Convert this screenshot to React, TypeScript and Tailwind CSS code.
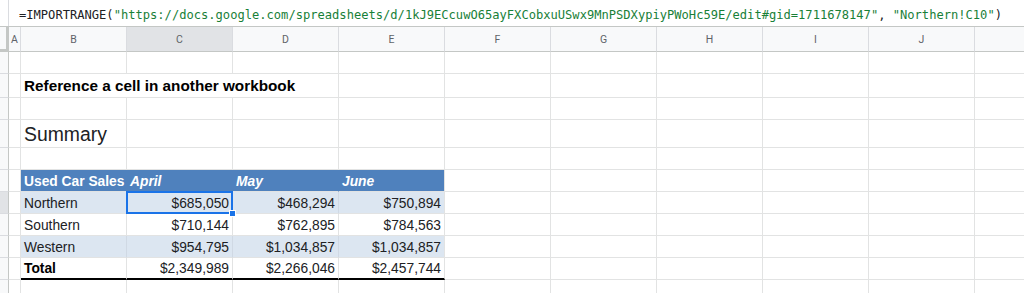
import React from "react";

const GRID = "border-[#e2e3e3]";

function Row({
  h,
  active = false,
  fill = 5,
  children,
}: {
  h: string;
  active?: boolean;
  fill?: number;
  children?: React.ReactNode;
}) {
  return (
    <div className={`flex ${h}`}>
      <div
        className={`w-[9px] shrink-0 border-r border-b border-r-[#c4c7c5] border-b-[#dadce0] ${
          active ? "bg-[#e1e3e6]" : "bg-[#f8f9fa]"
        }`}
      />
      <div className={`w-[12px] shrink-0 border-r border-b ${GRID}`} />
      {children}
      {Array.from({ length: fill }).map((_, i) => (
        <div key={i} className={`w-[106px] shrink-0 border-r border-b ${GRID}`} />
      ))}
      <div className={`flex-1 border-b ${GRID}`} />
    </div>
  );
}

function Empty({ n = 1 }: { n?: number }) {
  return (
    <>
      {Array.from({ length: n }).map((_, i) => (
        <div key={i} className={`w-[106px] shrink-0 border-r border-b ${GRID}`} />
      ))}
    </>
  );
}

function Cell({
  children,
  cls = "",
  right = false,
}: {
  children?: React.ReactNode;
  cls?: string;
  right?: boolean;
}) {
  return (
    <div
      className={`w-[106px] shrink-0 border-r border-b flex items-end px-[3px] pb-[1px] text-[13.8px] leading-[16px] whitespace-nowrap ${
        right ? "justify-end" : "justify-start"
      } ${cls}`}
    >
      {children}
    </div>
  );
}

const G = "text-[#188038]";

export default function App() {
  const cols = ["A", "B", "C", "D", "E", "F", "G", "H", "I", "J"];
  const light = "bg-[#dce6f1] border-r-[#d0d9e4] border-b-[#e2e3e3] text-[#202124]";
  const white = "bg-white border-[#e2e3e3] text-[#202124]";
  return (
    <div className="w-[1024px] h-[293px] overflow-hidden bg-white font-['Liberation_Sans',Arial,sans-serif] text-black">
      {/* formula bar */}
      <div className="flex h-[27px] border-b border-[#c4c7c5]">
        <div className="w-[9px] shrink-0 border-r border-[#dadce0]" />
        <div className="flex items-center pl-[10px] pt-[3px] font-['DejaVu_Sans_Mono','Liberation_Mono',monospace] text-[12.1px] leading-[16px] whitespace-nowrap text-[#202124]">
          <span>=IMPORTRANGE(</span>
          <span className={G}>
            "https://docs.google.com/spreadsheets/d/1kJ9ECcuwO65ayFXCobxuUSwx9MnPSDXypiyPWoHc59E/edit#gid=1711678147"
          </span>
          <span>,&nbsp;</span>
          <span className={G}>"Northern!C10"</span>
          <span>)</span>
        </div>
      </div>

      {/* column headers */}
      <div className="flex h-[25px] bg-[#f8f9fa] font-['Roboto',sans-serif] text-[10.5px] text-[#5f6368]">
        <div className="w-[9px] shrink-0 border-r-[3px] border-b-[3px] border-[#c4c7c5]" />
        {cols.map((c) => (
          <div
            key={c}
            className={`${c === "A" ? "w-[12px]" : "w-[106px]"} shrink-0 flex items-center justify-center pt-[1px] border-r border-b border-r-[#dadce0] border-b-[#c4c7c5] ${
              c === "C" ? "bg-[#e1e3e6]" : ""
            }`}
          >
            {c}
          </div>
        ))}
        <div className="flex-1 border-b border-[#c4c7c5]" />
      </div>

      {/* row 1 */}
      <Row h="h-[22px]">
        <Empty n={4} />
      </Row>

      {/* row 2 title */}
      <Row h="h-[24px]">
        <div
          className={`w-[318px] shrink-0 border-r border-b ${GRID} flex items-end px-[3px] pb-[2px] text-[15.3px] leading-[18px] font-bold whitespace-nowrap text-black`}
        >
          Reference a cell in another workbook
        </div>
        <Empty n={1} />
      </Row>

      {/* row 3 */}
      <Row h="h-[22px]">
        <Empty n={4} />
      </Row>

      {/* row 4 summary */}
      <Row h="h-[28px]">
        <div
          className={`w-[106px] shrink-0 border-r border-b ${GRID} flex items-end px-[3px] pb-[1px] text-[19.4px] leading-[23px] whitespace-nowrap text-[#202124]`}
        >
          Summary
        </div>
        <Empty n={3} />
      </Row>

      {/* row 5 */}
      <Row h="h-[22px]">
        <Empty n={4} />
      </Row>

      {/* table header */}
      <Row h="h-[22px]">
        <Cell cls="bg-[#4f81bd] border-r-[#4f81bd] border-b-[#e2e3e3] text-white font-bold">Used Car Sales</Cell>
        <Cell cls="bg-[#4f81bd] border-r-[#4f81bd] border-b-[#e2e3e3] text-white font-bold italic">April</Cell>
        <Cell cls="bg-[#4f81bd] border-r-[#4f81bd] border-b-[#e2e3e3] text-white font-bold italic">May</Cell>
        <Cell cls="bg-[#4f81bd] border-r-[#e2e3e3] border-b-[#e2e3e3] text-white font-bold italic">June</Cell>
      </Row>

      {/* Northern */}
      <Row h="h-[22px]" active>
        <Cell cls={light}>Northern</Cell>
        <div className="relative w-[106px] shrink-0 flex">
          <Cell right cls={`${light} w-full`}>
            $685,050
          </Cell>
          <div className="pointer-events-none absolute -left-[1px] -top-[1px] right-0 bottom-0 border-2 border-[#1a73e8]" />
          <div className="absolute z-10 -right-[3px] -bottom-[3px] w-[7px] h-[7px] bg-[#1a73e8] border border-white" />
        </div>
        <Cell right cls={light}>
          $468,294
        </Cell>
        <Cell right cls={`${light} border-r-[#e2e3e3]`}>
          $750,894
        </Cell>
      </Row>

      {/* Southern */}
      <Row h="h-[22px]">
        <Cell cls={white}>Southern</Cell>
        <Cell right cls={white}>
          $710,144
        </Cell>
        <Cell right cls={white}>
          $762,895
        </Cell>
        <Cell right cls={white}>
          $784,563
        </Cell>
      </Row>

      {/* Western */}
      <Row h="h-[22px]">
        <Cell cls={`${light} border-b-[#5f5f5f]`}>Western</Cell>
        <Cell right cls={`${light} border-b-[#5f5f5f]`}>
          $954,795
        </Cell>
        <Cell right cls={`${light} border-b-[#5f5f5f]`}>
          $1,034,857
        </Cell>
        <Cell right cls={`${light} border-b-[#5f5f5f] border-r-[#e2e3e3]`}>
          $1,034,857
        </Cell>
      </Row>

      {/* Total */}
      <Row h="h-[22px]">
        <Cell cls="bg-white border-r-[#e2e3e3] border-b-2 border-b-black font-bold text-black">Total</Cell>
        <Cell right cls="bg-white border-r-[#e2e3e3] border-b-2 border-b-black text-[#202124]">
          $2,349,989
        </Cell>
        <Cell right cls="bg-white border-r-[#e2e3e3] border-b-2 border-b-black text-[#202124]">
          $2,266,046
        </Cell>
        <Cell right cls="bg-white border-r-[#e2e3e3] border-b-2 border-b-black text-[#202124]">
          $2,457,744
        </Cell>
      </Row>

      {/* trailing row */}
      <Row h="h-[22px]">
        <Empty n={4} />
      </Row>
    </div>
  );
}
